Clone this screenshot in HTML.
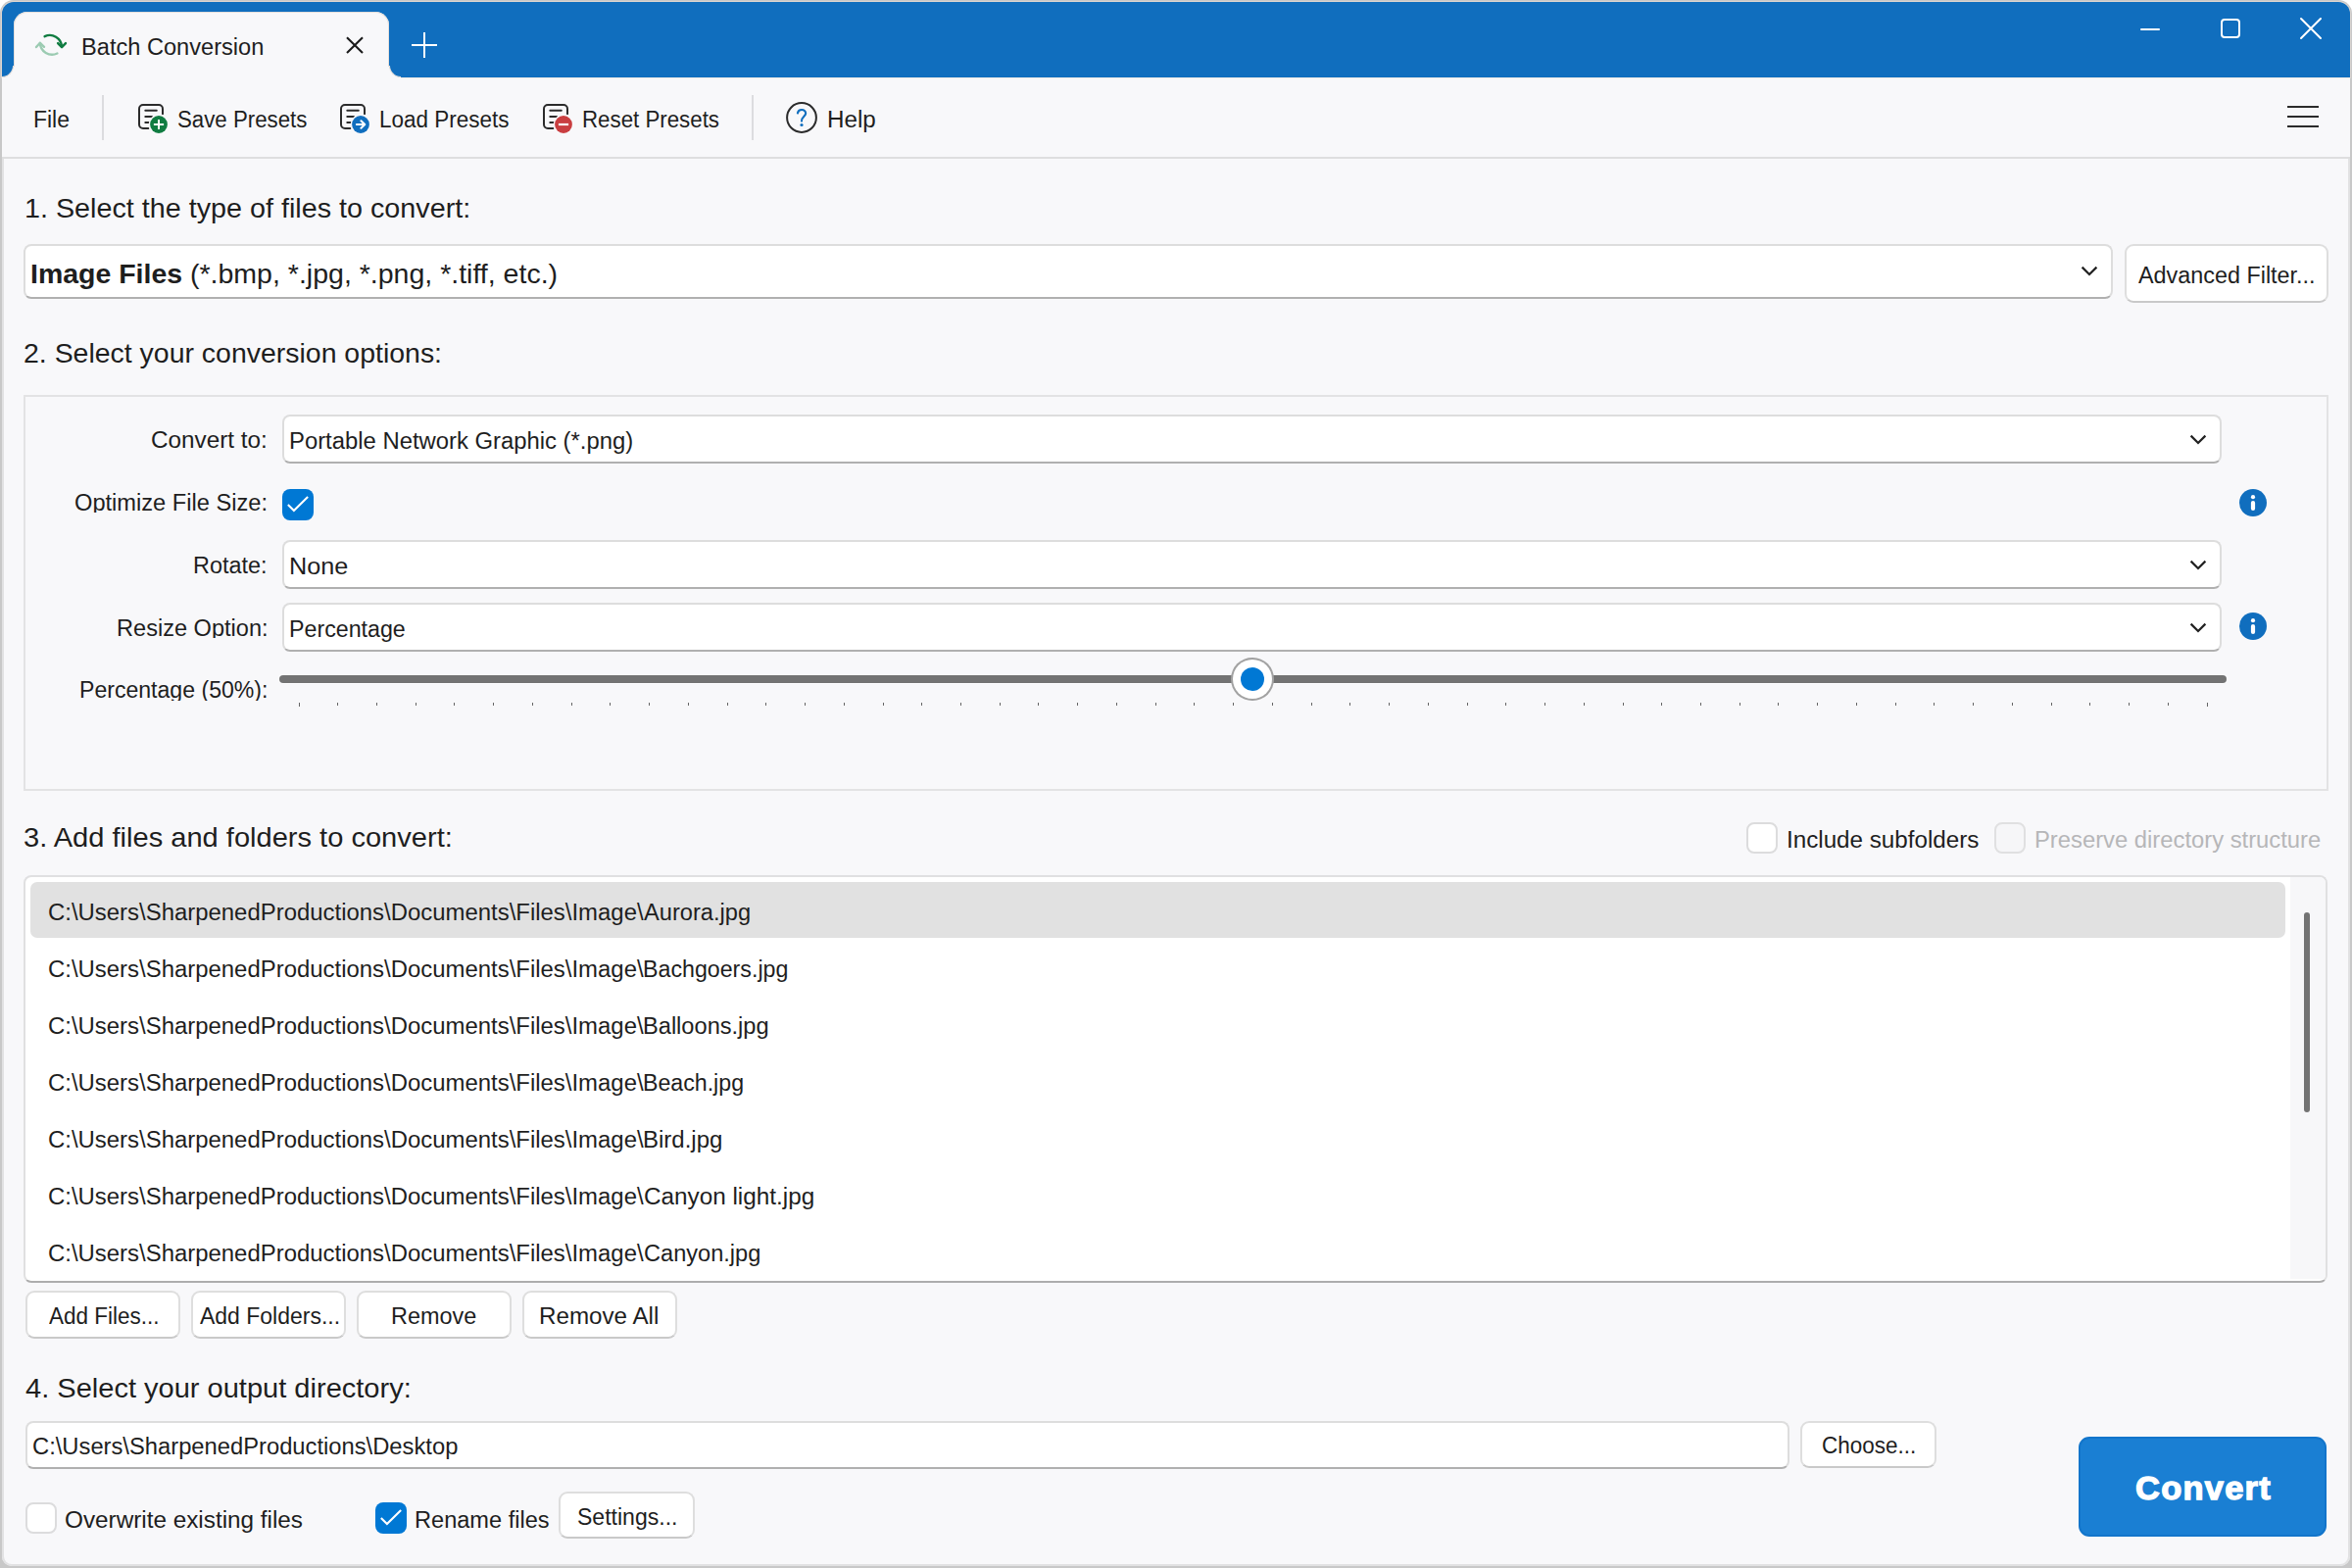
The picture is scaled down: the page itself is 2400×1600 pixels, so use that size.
<!DOCTYPE html>
<html lang="en">
<head>
<meta charset="utf-8">
<title>Batch Conversion</title>
<style>
*{box-sizing:border-box;margin:0;padding:0}
html,body{width:2400px;height:1600px;overflow:hidden;background:#fff}
body{font-family:"Liberation Sans",sans-serif;color:#1e1e1e;position:relative}
.a{position:absolute}
.t{position:absolute;white-space:pre;transform-origin:0 0;display:block}
.clip{position:absolute;overflow:hidden}
#frame{left:0;top:0;width:2400px;height:1600px;background:#c8c8c8;border-radius:14px 14px 0 0}
#frame2{left:1px;top:1px;width:2398px;height:79px;background:#ddd6d0;border-radius:13px 13px 0 0}
#title{left:2px;top:2px;width:2396px;height:78px;background:#106ebe;border-radius:12px 12px 0 0}
#body{left:2px;top:79px;width:2396px;height:1519px;background:#f8f8fa;border-radius:0 0 10px 10px}
#content{left:2px;top:162px;width:2396px;height:1436px;border:2px solid #e2e2e3;border-top:none;border-radius:0 0 10px 10px}
#tbline{left:2px;top:160px;width:2396px;height:2px;background:#dededf}
#tab{left:14px;top:12px;width:383px;height:68px;background:#f8f8fa;border-radius:14px 14px 0 0}
#tabb{left:14px;top:12px;width:383px;height:56px;border:1px solid #e4dfdb;border-bottom:none;border-radius:14px 14px 0 0}
.foot{width:12px;height:12px;top:67px;background:#f8f8fa}
.foot i{position:absolute;left:0;top:0;width:12px;height:12px;background:#106ebe;display:block;border:0 solid #e4dfdb}
.sep{width:2px;background:#dcdcdf}
.combo{background:#fff;border:2px solid #dddddd;border-bottom-color:#b0b0b0;border-radius:8px}
.btn{background:#fff;border:2px solid #dedede;border-bottom-color:#c9c9c9;border-radius:9px}
.cb{width:32px;height:32px;border-radius:8px;border:2px solid #dcdcdd;background:#fff}
.cb.on{background:#0078d4;border:none}
.cb.dis{background:#f6f6f8;border-color:#e0e0e1}
.group{border:2px solid #e3e3e4}
svg{position:absolute;overflow:visible}
</style>
</head>
<body>
<div class="a" id="frame"></div>
<div class="a" id="frame2"></div>
<div class="a" id="title"></div>
<div class="a" id="body"></div>
<div class="a" id="tab"></div>
<div class="a" id="tabb"></div>
<div class="a foot" style="left:2px"><i style="border-bottom-right-radius:12px;border-right-width:1px;border-bottom-width:1px"></i></div>
<div class="a foot" style="left:397px"><i style="border-bottom-left-radius:12px;border-left-width:1px;border-bottom-width:1px"></i></div>
<div class="a" id="tbline"></div>
<div class="a" style="left:409px;top:79px;width:1989px;height:1px;background:#f0ebe7"></div>
<div class="a" id="content"></div>

<!-- title bar icons -->
<svg style="left:30px;top:28px" width="44" height="36" viewBox="0 0 44 36" fill="none" stroke-width="2.4" stroke-linecap="round" stroke-linejoin="round">
  <path d="M15.6 9.2 A12.2 12.2 0 0 1 33.05 19.6" stroke="#107c41"/>
  <path d="M29.1 16.1 L33.05 20.2 L37 16.1" stroke="#107c41"/>
  <path d="M10.9 15.9 A12.2 12.2 0 0 0 28.4 26.5" stroke="#9ccbb2"/>
  <path d="M7 20 L10.9 15.8 L15 19.8" stroke="#9ccbb2"/>
</svg>
<svg style="left:353px;top:37px" width="18" height="18" viewBox="0 0 18 18" stroke="#1b1b1b" stroke-width="2.1" stroke-linecap="butt"><path d="M1 1.3 L17 17.1 M17 1.3 L1 17.1"/></svg>
<svg style="left:420px;top:33px" width="26" height="26" viewBox="0 0 26 26" stroke="#fff" stroke-width="2" stroke-linecap="butt"><path d="M13 0 V26 M0 13 H26"/></svg>
<div class="a" style="left:2184px;top:29px;width:20px;height:2px;background:#fff;border-radius:1px"></div>
<div class="a" style="left:2266px;top:19px;width:20px;height:20px;border:2px solid #fff;border-radius:4px"></div>
<svg style="left:2347px;top:18px" width="22" height="22" viewBox="0 0 22 22" stroke="#fff" stroke-width="2" stroke-linecap="round"><path d="M1 1 L21 21 M21 1 L1 21"/></svg>

<!-- toolbar -->
<div class="a sep" style="left:104px;top:97px;height:46px"></div>
<div class="a sep" style="left:767px;top:97px;height:46px"></div>
<!-- save presets icon -->
<svg style="left:138px;top:104px" width="36" height="36" viewBox="0 0 36 36" fill="none" stroke="#2b2b2b" stroke-width="2" stroke-linecap="round" stroke-linejoin="round">
  <path d="M13.4 27 H8 a4 4 0 0 1 -4 -4 V7 a4 4 0 0 1 4 -4 H24 a4 4 0 0 1 4 4 V12.3"/>
  <path d="M10.3 8.85 H21.8 M10.3 14.9 H17 M10.3 21 H14"/>
  <circle cx="24" cy="23" r="10.4" fill="#f8f8fa" stroke="none"/>
  <circle cx="24" cy="23" r="8.9" fill="#107c41" stroke="none"/><path d="M24 17.9 V28.1 M18.9 23 H29.1" stroke="#fff" stroke-width="2" stroke-linecap="butt"/>
</svg>
<svg style="left:344px;top:104px" width="36" height="36" viewBox="0 0 36 36" fill="none" stroke="#2b2b2b" stroke-width="2" stroke-linecap="round" stroke-linejoin="round">
  <path d="M13.4 27 H8 a4 4 0 0 1 -4 -4 V7 a4 4 0 0 1 4 -4 H24 a4 4 0 0 1 4 4 V12.3"/>
  <path d="M10.3 8.85 H21.8 M10.3 14.9 H17 M10.3 21 H14"/>
  <circle cx="24" cy="23" r="10.4" fill="#f8f8fa" stroke="none"/>
  <circle cx="24" cy="23" r="8.9" fill="#106ebe" stroke="none"/><path d="M19.9 23 H28 M24.4 19.2 L28.3 23 L24.4 26.8" stroke="#fff" stroke-width="2"/>
</svg>
<svg style="left:551px;top:104px" width="36" height="36" viewBox="0 0 36 36" fill="none" stroke="#2b2b2b" stroke-width="2" stroke-linecap="round" stroke-linejoin="round">
  <path d="M13.4 27 H8 a4 4 0 0 1 -4 -4 V7 a4 4 0 0 1 4 -4 H24 a4 4 0 0 1 4 4 V12.3"/>
  <path d="M10.3 8.85 H21.8 M10.3 14.9 H17 M10.3 21 H14"/>
  <circle cx="24" cy="23" r="10.4" fill="#f8f8fa" stroke="none"/>
  <circle cx="24" cy="23" r="8.9" fill="#c93e40" stroke="none"/><path d="M18.9 23 H29.1" stroke="#fff" stroke-width="2.2" stroke-linecap="butt"/>
</svg>
<!-- help icon -->
<svg style="left:802px;top:104px" width="32" height="32" viewBox="0 0 32 32" fill="none" stroke-linecap="round" stroke-linejoin="round">
  <circle cx="16" cy="16" r="14.9" stroke="#2b2b2b" stroke-width="2"/>
  <path d="M11.9 11.5 A4.2 4.2 0 0 1 20.2 11.6 C20.2 14.8 16 15 16 19.6" stroke="#106ebe" stroke-width="2.1"/>
  <circle cx="16" cy="23.5" r="1.6" fill="#106ebe"/>
</svg>
<!-- hamburger -->
<div class="a" style="left:2334px;top:108px;width:32px;height:2px;background:#2b2b2b"></div>
<div class="a" style="left:2334px;top:118px;width:32px;height:2px;background:#2b2b2b"></div>
<div class="a" style="left:2334px;top:128px;width:32px;height:2px;background:#2b2b2b"></div>

<!-- section 1 -->
<div class="a combo" style="left:24px;top:249px;width:2132px;height:56px"></div>
<svg style="left:2123px;top:271px" width="18" height="11" viewBox="0 0 18 11" fill="none" stroke="#222" stroke-width="2.2" stroke-linecap="butt" stroke-linejoin="miter"><path d="M1.6 1.6 L9 9 L16.4 1.6"/></svg>
<div class="a btn" style="left:2168px;top:249px;width:208px;height:60px"></div>

<!-- section 2 -->
<div class="a group" style="left:24px;top:403px;width:2352px;height:404px"></div>
<div class="a combo" style="left:288px;top:423px;width:1979px;height:50px"></div>
<div class="a combo" style="left:288px;top:551px;width:1979px;height:50px"></div>
<div class="a combo" style="left:288px;top:615px;width:1979px;height:50px"></div>
<svg style="left:2234px;top:443px" width="18" height="11" viewBox="0 0 18 11" fill="none" stroke="#222" stroke-width="2.2" stroke-linecap="butt" stroke-linejoin="miter"><path d="M1.6 1.6 L9 9 L16.4 1.6"/></svg>
<svg style="left:2234px;top:571px" width="18" height="11" viewBox="0 0 18 11" fill="none" stroke="#222" stroke-width="2.2" stroke-linecap="butt" stroke-linejoin="miter"><path d="M1.6 1.6 L9 9 L16.4 1.6"/></svg>
<svg style="left:2234px;top:635px" width="18" height="11" viewBox="0 0 18 11" fill="none" stroke="#222" stroke-width="2.2" stroke-linecap="butt" stroke-linejoin="miter"><path d="M1.6 1.6 L9 9 L16.4 1.6"/></svg>
<div class="a cb on" style="left:288px;top:499px"></div>
<svg style="left:288px;top:499px" width="32" height="32" viewBox="0 0 32 32" fill="none" stroke="#fff" stroke-width="2.1" stroke-linecap="square" stroke-linejoin="miter"><path d="M6.6 16.8 L11.9 22 L25.4 8.7"/></svg>
<!-- info icons -->
<svg style="left:2285px;top:499px" width="28" height="28" viewBox="0 0 28 28"><circle cx="14" cy="14" r="14" fill="#106ebe"/><circle cx="14" cy="8.2" r="2.1" fill="#fff"/><rect x="11.9" y="12" width="4.2" height="10.1" rx="2.1" fill="#fff"/></svg>
<svg style="left:2285px;top:625px" width="28" height="28" viewBox="0 0 28 28"><circle cx="14" cy="14" r="14" fill="#106ebe"/><circle cx="14" cy="8.2" r="2.1" fill="#fff"/><rect x="11.9" y="12" width="4.2" height="10.1" rx="2.1" fill="#fff"/></svg>
<!-- slider -->
<div class="a" style="left:284px;top:688px;width:1989px;height:10px;background:#fdfdfe;border-radius:5px"></div><div class="a" style="left:285px;top:689px;width:1987px;height:8px;background:#737373;border-radius:4px"></div>
<div class="a" id="ticks" style="left:0;top:717px;width:2400px;height:4px"><i style="position:absolute;left:305px;top:0;width:1px;height:4px;background:#666"></i><i style="position:absolute;left:344px;top:0;width:1px;height:3px;background:#666"></i><i style="position:absolute;left:384px;top:0;width:1px;height:3px;background:#666"></i><i style="position:absolute;left:424px;top:0;width:1px;height:3px;background:#666"></i><i style="position:absolute;left:463px;top:0;width:1px;height:3px;background:#666"></i><i style="position:absolute;left:503px;top:0;width:1px;height:3px;background:#666"></i><i style="position:absolute;left:543px;top:0;width:1px;height:3px;background:#666"></i><i style="position:absolute;left:583px;top:0;width:1px;height:3px;background:#666"></i><i style="position:absolute;left:622px;top:0;width:1px;height:3px;background:#666"></i><i style="position:absolute;left:662px;top:0;width:1px;height:3px;background:#666"></i><i style="position:absolute;left:702px;top:0;width:1px;height:3px;background:#666"></i><i style="position:absolute;left:742px;top:0;width:1px;height:3px;background:#666"></i><i style="position:absolute;left:781px;top:0;width:1px;height:3px;background:#666"></i><i style="position:absolute;left:821px;top:0;width:1px;height:3px;background:#666"></i><i style="position:absolute;left:861px;top:0;width:1px;height:3px;background:#666"></i><i style="position:absolute;left:901px;top:0;width:1px;height:3px;background:#666"></i><i style="position:absolute;left:940px;top:0;width:1px;height:3px;background:#666"></i><i style="position:absolute;left:980px;top:0;width:1px;height:3px;background:#666"></i><i style="position:absolute;left:1020px;top:0;width:1px;height:3px;background:#666"></i><i style="position:absolute;left:1059px;top:0;width:1px;height:3px;background:#666"></i><i style="position:absolute;left:1099px;top:0;width:1px;height:3px;background:#666"></i><i style="position:absolute;left:1139px;top:0;width:1px;height:3px;background:#666"></i><i style="position:absolute;left:1179px;top:0;width:1px;height:3px;background:#666"></i><i style="position:absolute;left:1218px;top:0;width:1px;height:3px;background:#666"></i><i style="position:absolute;left:1258px;top:0;width:1px;height:3px;background:#666"></i><i style="position:absolute;left:1298px;top:0;width:1px;height:3px;background:#666"></i><i style="position:absolute;left:1338px;top:0;width:1px;height:3px;background:#666"></i><i style="position:absolute;left:1377px;top:0;width:1px;height:3px;background:#666"></i><i style="position:absolute;left:1417px;top:0;width:1px;height:3px;background:#666"></i><i style="position:absolute;left:1457px;top:0;width:1px;height:3px;background:#666"></i><i style="position:absolute;left:1497px;top:0;width:1px;height:3px;background:#666"></i><i style="position:absolute;left:1536px;top:0;width:1px;height:3px;background:#666"></i><i style="position:absolute;left:1576px;top:0;width:1px;height:3px;background:#666"></i><i style="position:absolute;left:1616px;top:0;width:1px;height:3px;background:#666"></i><i style="position:absolute;left:1656px;top:0;width:1px;height:3px;background:#666"></i><i style="position:absolute;left:1695px;top:0;width:1px;height:3px;background:#666"></i><i style="position:absolute;left:1735px;top:0;width:1px;height:3px;background:#666"></i><i style="position:absolute;left:1775px;top:0;width:1px;height:3px;background:#666"></i><i style="position:absolute;left:1814px;top:0;width:1px;height:3px;background:#666"></i><i style="position:absolute;left:1854px;top:0;width:1px;height:3px;background:#666"></i><i style="position:absolute;left:1894px;top:0;width:1px;height:3px;background:#666"></i><i style="position:absolute;left:1934px;top:0;width:1px;height:3px;background:#666"></i><i style="position:absolute;left:1973px;top:0;width:1px;height:3px;background:#666"></i><i style="position:absolute;left:2013px;top:0;width:1px;height:3px;background:#666"></i><i style="position:absolute;left:2053px;top:0;width:1px;height:3px;background:#666"></i><i style="position:absolute;left:2093px;top:0;width:1px;height:3px;background:#666"></i><i style="position:absolute;left:2132px;top:0;width:1px;height:3px;background:#666"></i><i style="position:absolute;left:2172px;top:0;width:1px;height:3px;background:#666"></i><i style="position:absolute;left:2212px;top:0;width:1px;height:3px;background:#666"></i><i style="position:absolute;left:2252px;top:0;width:1px;height:4px;background:#666"></i></div>
<div class="a" style="left:1256.3px;top:671.3px;width:43.4px;height:43.4px;border-radius:50%;background:#a2a2a2"></div><div class="a" style="left:1257.8px;top:672.8px;width:40.4px;height:40.4px;border-radius:50%;background:#fff"></div>
<div class="a" style="left:1266px;top:681px;width:24px;height:24px;border-radius:50%;background:#0078d4"></div>

<!-- section 3 -->
<div class="a cb" style="left:1782px;top:839px"></div>
<div class="a cb dis" style="left:2035px;top:839px"></div>
<div class="a" style="left:24px;top:893px;width:2351px;height:416px;background:#fff;border:2px solid #e0e0e1;border-bottom-color:#adadad;border-radius:8px;overflow:hidden">
  <div class="a" style="left:2311px;top:0;width:36px;height:410px;background:#f7f7f9"></div>
</div>
<div class="a" style="left:31px;top:900px;width:2301px;height:57px;background:#e1e1e1;border-radius:7px"></div>
<div class="a" style="left:2351px;top:930.5px;width:6px;height:204.5px;background:#737373;border-radius:3px"></div>
<div class="a btn" style="left:26px;top:1317px;width:158px;height:49px"></div>
<div class="a btn" style="left:195px;top:1317px;width:158px;height:49px"></div>
<div class="a btn" style="left:364px;top:1317px;width:158px;height:49px"></div>
<div class="a btn" style="left:533px;top:1317px;width:158px;height:49px"></div>

<!-- section 4 -->
<div class="a combo" style="left:26px;top:1450px;width:1800px;height:49px"></div>
<div class="a btn" style="left:1837px;top:1450px;width:139px;height:48px"></div>
<div class="a cb" style="left:26px;top:1533px"></div>
<div class="a cb on" style="left:383px;top:1533px"></div>
<svg style="left:383px;top:1533px" width="32" height="32" viewBox="0 0 32 32" fill="none" stroke="#fff" stroke-width="2.1" stroke-linecap="square" stroke-linejoin="miter"><path d="M6.6 16.8 L11.9 22 L25.4 8.7"/></svg>
<div class="a btn" style="left:570px;top:1522px;width:139px;height:48px"></div>
<div class="a" style="left:2121px;top:1466px;width:253px;height:102px;background:#1a7fd3;border:2px solid #1275cb;border-radius:11px"></div>

<span class="t" style="left:82.64px;top:32.00px;font-size:23.5px;line-height:32px;transform:scaleX(1.0047);">Batch Conversion</span>
<span class="t" style="left:33.99px;top:106.00px;font-size:23.5px;line-height:32px;transform:scaleX(0.9768);">File</span>
<span class="t" style="left:180.68px;top:106.00px;font-size:23.5px;line-height:32px;transform:scaleX(0.9468);">Save Presets</span>
<span class="t" style="left:387.33px;top:106.00px;font-size:23.5px;line-height:32px;transform:scaleX(0.9561);">Load Presets</span>
<span class="t" style="left:594.14px;top:106.00px;font-size:23.5px;line-height:32px;transform:scaleX(0.9485);">Reset Presets</span>
<span class="t" style="left:844.19px;top:106.00px;font-size:23.5px;line-height:32px;transform:scaleX(1.0294);">Help</span>
<span class="t" style="left:24.85px;top:193.00px;font-size:28.5px;line-height:38px;transform:scaleX(1.0082);">1. Select the type of files to convert:</span>
<span class="t" style="left:31.35px;top:260.00px;font-size:28.5px;line-height:38px;transform:scaleX(0.9990);font-weight:700;">Image Files</span>
<span class="t" style="left:194.13px;top:260.00px;font-size:28.5px;line-height:38px;transform:scaleX(1.0004);">(*.bmp, *.jpg, *.png, *.tiff, etc.)</span>
<span class="t" style="left:2182.34px;top:265.00px;font-size:23.5px;line-height:32px;transform:scaleX(0.9944);">Advanced Filter...</span>
<span class="t" style="left:23.91px;top:341.00px;font-size:28.5px;line-height:38px;transform:scaleX(0.9983);">2. Select your conversion options:</span>
<span class="t" style="left:154.31px;top:433.00px;font-size:23.5px;line-height:32px;transform:scaleX(1.0334);">Convert to:</span>
<span class="t" style="left:295.12px;top:434.00px;font-size:23.5px;line-height:32px;transform:scaleX(1.0146);">Portable Network Graphic (*.png)</span>
<span class="t" style="left:197.46px;top:561.00px;font-size:23.5px;line-height:32px;transform:scaleX(0.9962);">Rotate:</span>
<span class="t" style="left:295.01px;top:562.00px;font-size:23.5px;line-height:32px;transform:scaleX(1.0727);">None</span>
<span class="t" style="left:295.17px;top:626.00px;font-size:23.5px;line-height:32px;transform:scaleX(0.9880);">Percentage</span>
<span class="t" style="left:24.12px;top:835.00px;font-size:28.5px;line-height:38px;transform:scaleX(1.0197);">3. Add files and folders to convert:</span>
<span class="t" style="left:1822.60px;top:841.00px;font-size:23.5px;line-height:32px;transform:scaleX(1.0299);">Include subfolders</span>
<span class="t" style="left:2075.73px;top:841.00px;font-size:23.5px;line-height:32px;transform:scaleX(1.0124);color:#b6b6b8;">Preserve directory structure</span>
<span class="t" style="left:48.62px;top:915.00px;font-size:23.5px;line-height:32px;transform:scaleX(1.0179);">C:\Users\SharpenedProductions\Documents\Files\Image\</span>
<span class="t" style="left:656.84px;top:915.00px;font-size:23.5px;line-height:32px;transform:scaleX(1.0055);">Aurora.jpg</span>
<span class="t" style="left:48.62px;top:973.00px;font-size:23.5px;line-height:32px;transform:scaleX(1.0179);">C:\Users\SharpenedProductions\Documents\Files\Image\</span>
<span class="t" style="left:656.17px;top:973.00px;font-size:23.5px;line-height:32px;transform:scaleX(0.9876);">Bachgoers.jpg</span>
<span class="t" style="left:48.62px;top:1031.00px;font-size:23.5px;line-height:32px;transform:scaleX(1.0179);">C:\Users\SharpenedProductions\Documents\Files\Image\</span>
<span class="t" style="left:656.14px;top:1031.00px;font-size:23.5px;line-height:32px;transform:scaleX(1.0046);">Balloons.jpg</span>
<span class="t" style="left:48.62px;top:1089.00px;font-size:23.5px;line-height:32px;transform:scaleX(1.0179);">C:\Users\SharpenedProductions\Documents\Files\Image\</span>
<span class="t" style="left:656.18px;top:1089.00px;font-size:23.5px;line-height:32px;transform:scaleX(0.9858);">Beach.jpg</span>
<span class="t" style="left:48.62px;top:1147.00px;font-size:23.5px;line-height:32px;transform:scaleX(1.0179);">C:\Users\SharpenedProductions\Documents\Files\Image\</span>
<span class="t" style="left:656.11px;top:1147.00px;font-size:23.5px;line-height:32px;transform:scaleX(1.0205);">Bird.jpg</span>
<span class="t" style="left:48.62px;top:1205.00px;font-size:23.5px;line-height:32px;transform:scaleX(1.0179);">C:\Users\SharpenedProductions\Documents\Files\Image\</span>
<span class="t" style="left:656.51px;top:1205.00px;font-size:23.5px;line-height:32px;transform:scaleX(1.0335);">Canyon light.jpg</span>
<span class="t" style="left:48.62px;top:1263.00px;font-size:23.5px;line-height:32px;transform:scaleX(1.0179);">C:\Users\SharpenedProductions\Documents\Files\Image\</span>
<span class="t" style="left:656.54px;top:1263.00px;font-size:23.5px;line-height:32px;transform:scaleX(1.0032);">Canyon.jpg</span>
<span class="t" style="left:49.73px;top:1327.00px;font-size:23.5px;line-height:32px;transform:scaleX(0.9575);">Add Files...</span>
<span class="t" style="left:203.53px;top:1327.00px;font-size:23.5px;line-height:32px;transform:scaleX(0.9779);">Add Folders...</span>
<span class="t" style="left:398.55px;top:1327.00px;font-size:23.5px;line-height:32px;transform:scaleX(0.9970);">Remove</span>
<span class="t" style="left:550.10px;top:1327.00px;font-size:23.5px;line-height:32px;transform:scaleX(1.0291);">Remove All</span>
<span class="t" style="left:25.62px;top:1397.00px;font-size:28.5px;line-height:38px;transform:scaleX(1.0187);">4. Select your output directory:</span>
<span class="t" style="left:33.03px;top:1460.00px;font-size:23.5px;line-height:32px;transform:scaleX(1.0107);">C:\Users\SharpenedProductions\Desktop</span>
<span class="t" style="left:1858.88px;top:1459.00px;font-size:23.5px;line-height:32px;transform:scaleX(0.9558);">Choose...</span>
<span class="t" style="left:66.34px;top:1535.00px;font-size:23.5px;line-height:32px;transform:scaleX(1.0338);">Overwrite existing files</span>
<span class="t" style="left:423.14px;top:1535.00px;font-size:23.5px;line-height:32px;transform:scaleX(1.0030);">Rename files</span>
<span class="t" style="left:589.05px;top:1532.00px;font-size:23.5px;line-height:32px;transform:scaleX(0.9802);">Settings...</span>
<span class="t" style="left:2179.14px;top:1497.00px;font-size:33.5px;line-height:43px;transform:scaleX(1.0294);font-weight:700;color:#ffffff;letter-spacing:1.2px;-webkit-text-stroke:1.3px #ffffff;">Convert</span>
<div class="clip" style="left:0;top:497.00px;width:300px;height:26.20px"><span class="t" style="left:76.06px;top:0;font-size:23.5px;line-height:32px;transform:scaleX(1.0057);">Optimize File Size:</span></div>
<div class="clip" style="left:0;top:625.00px;width:300px;height:26.00px"><span class="t" style="left:118.64px;top:0;font-size:23.5px;line-height:32px;transform:scaleX(1.0029);">Resize Option:</span></div>
<div class="clip" style="left:0;top:688.00px;width:300px;height:27.00px"><span class="t" style="left:80.58px;top:0;font-size:23.5px;line-height:32px;transform:scaleX(0.9820);">Percentage (50%):</span></div>
</body>
</html>
